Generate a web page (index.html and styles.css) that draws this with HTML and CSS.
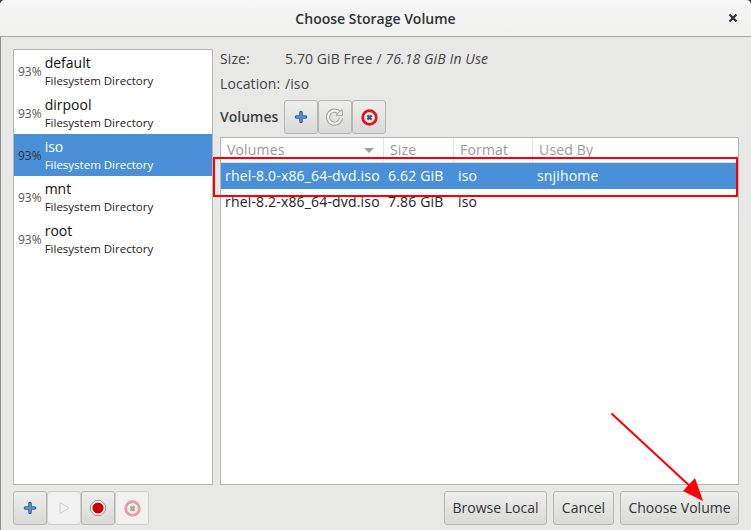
FILE: index.html
```html
<!DOCTYPE html>
<html lang="en">

<head>
    <meta charset="UTF-8">
    <meta name="viewport" content="width=device-width, initial-scale=1.0">
    <title>Choose Storage Volume</title>
    <link rel="stylesheet" href="styles.css">
</head>

<body>
    <div class="window">
        <div class="titlebar">
            <span class="title">Choose Storage Volume</span>
            <svg class="close" width="10" height="10" viewBox="0 0 10 10">
                <path d="M1.5 1.5 L8.5 8.5 M8.5 1.5 L1.5 8.5" stroke="#2e3436" stroke-width="2.2" fill="none" />
            </svg>
        </div>

        <div class="content">
            <div class="left">
                <div class="pools">
                    <div class="pool">
                        <span class="pct">93%</span>
                        <div><div class="pool-name">default</div><div class="pool-type">Filesystem Directory</div></div>
                    </div>
                    <div class="pool">
                        <span class="pct">93%</span>
                        <div><div class="pool-name">dirpool</div><div class="pool-type">Filesystem Directory</div></div>
                    </div>
                    <div class="pool selected">
                        <span class="pct">93%</span>
                        <div><div class="pool-name">iso</div><div class="pool-type">Filesystem Directory</div></div>
                    </div>
                    <div class="pool">
                        <span class="pct">93%</span>
                        <div><div class="pool-name">mnt</div><div class="pool-type">Filesystem Directory</div></div>
                    </div>
                    <div class="pool">
                        <span class="pct">93%</span>
                        <div><div class="pool-name">root</div><div class="pool-type">Filesystem Directory</div></div>
                    </div>
                </div>
                <div class="toolbar">
                    <button class="tool">
                        <svg width="14" height="14" viewBox="0 0 14 14"><path d="M7 2.5 V11.5 M2.5 7 H11.5" stroke="#2f5f9e" stroke-width="3.6" stroke-linecap="round" /><path d="M7 3 V11 M3 7 H11" stroke="#5b8fcb" stroke-width="1.8" stroke-linecap="round" /></svg>
                    </button>
                    <button class="tool off">
                        <svg width="14" height="14" viewBox="0 0 14 14"><path d="M3 1.5 L12 7 L3 12.5 Z" fill="#f2f2f2" stroke="#cdcdcd" /></svg>
                    </button>
                    <button class="tool">
                        <svg width="16" height="16" viewBox="0 0 16 16"><path d="M5 .7 H11 L15.3 5 V11 L11 15.3 H5 L.7 11 V5 Z" fill="#fff" stroke="#8a8a8a" /><circle cx="8" cy="8" r="5.6" fill="#d40000" /></svg>
                    </button>
                    <button class="tool off">
                        <svg width="17" height="17" viewBox="0 0 17 17"><circle cx="8.5" cy="8.5" r="6.8" fill="#eee" stroke="#ec9a9a" stroke-width="2.8" /><path d="M6.4 6.4 L10.6 10.6 M10.6 6.4 L6.4 10.6" stroke="#a8a8a8" stroke-width="2.2" /></svg>
                    </button>
                </div>
            </div>

            <div class="right">
                <div class="info">
                    <div class="info-row"><span class="info-label">Size:</span><span>5.70 GiB Free / <em>76.18 GiB In Use</em></span></div>
                    <div class="info-row"><span class="info-label">Location:</span><span>/iso</span></div>
                </div>
                <div class="vol-bar">
                    <span class="vol-title">Volumes</span>
                    <div class="group">
                        <button class="tool">
                            <svg width="14" height="14" viewBox="0 0 14 14"><path d="M7 2.5 V11.5 M2.5 7 H11.5" stroke="#2f5f9e" stroke-width="3.6" stroke-linecap="round" /><path d="M7 3 V11 M3 7 H11" stroke="#5b8fcb" stroke-width="1.8" stroke-linecap="round" /></svg>
                        </button>
                        <button class="tool">
                            <svg width="18" height="18" viewBox="0 0 18 18"><path d="M13.5 5 A6.5 6.5 0 1 0 15 10" fill="none" stroke="#a0a0a0" stroke-width="4.2" /><path d="M13.5 5 A6.5 6.5 0 1 0 15 10" fill="none" stroke="#f0f0f0" stroke-width="2.2" /><path d="M10 7 L16.5 7.5 L16 1.5 Z" fill="#ececec" stroke="#a0a0a0" /></svg>
                        </button>
                        <button class="tool">
                            <svg width="17" height="17" viewBox="0 0 17 17"><circle cx="8.5" cy="8.5" r="6.8" fill="#eee" stroke="#e0141c" stroke-width="2.8" /><path d="M6.4 6.4 L10.6 10.6 M10.6 6.4 L6.4 10.6" stroke="#555" stroke-width="2.2" /></svg>
                        </button>
                    </div>
                </div>
                <div class="table">
                    <div class="row head">
                        <div class="col c1">Volumes<span class="sort"></span></div>
                        <div class="col c2">Size</div>
                        <div class="col c3">Format</div>
                        <div class="col c4">Used By</div>
                    </div>
                    <div class="row vol selected">
                        <div class="col c1">rhel-8.0-x86_64-dvd.iso</div>
                        <div class="col c2">6.62 GiB</div>
                        <div class="col c3">iso</div>
                        <div class="col c4">snjihome</div>
                    </div>
                    <div class="row vol">
                        <div class="col c1">rhel-8.2-x86_64-dvd.iso</div>
                        <div class="col c2">7.86 GiB</div>
                        <div class="col c3">iso</div>
                        <div class="col c4"></div>
                    </div>
                </div>
                <div class="actions">
                    <button class="btn browse">Browse Local</button>
                    <button class="btn cancel">Cancel</button>
                    <button class="btn choose">Choose Volume</button>
                </div>
            </div>
        </div>

        <!-- annotations drawn over the dialog -->
        <div class="mark"></div>
        <svg class="arrow" width="751" height="530" viewBox="0 0 751 530">
            <path d="M611.5 413.5 L692 488" stroke="#ff0000" stroke-width="2" fill="none" />
            <path d="M703 501 L683 491 L695 478 Z" fill="#ff0000" />
        </svg>
    </div>
</body>

</html>
```

FILE: styles.css
```css
html, body {
    margin: 0;
    padding: 0;
}

body {
    width: 751px;
    height: 530px;
    overflow: hidden;
    font-family: "Open Sans", "Noto Sans", sans-serif;
    font-size: 14px;
    color: #2e3436;
    background: #3a3a3a;
}

.window {
    position: relative;
    width: 751px;
    height: 530px;
    background: #e8e8e7;
    border-radius: 5px 5px 0 0;
    box-shadow: inset 1px 0 0 #8f8f8f;
    overflow: hidden;
}

.titlebar {
    height: 36px;
    display: flex;
    align-items: center;
    justify-content: center;
    background: linear-gradient(#f6f6f6, #f1f1f0);
    border-bottom: 1px solid #a5a5a1;
}

.title {
    font-weight: 600;
    font-size: 14px;
}

.close {
    position: absolute;
    right: 13px;
    top: 13px;
}

.content {
    display: flex;
    gap: 7px;
    padding: 12px 12px 5px 13px;
    box-sizing: border-box;
    height: 493px;
}

.left {
    width: 200px;
    display: flex;
    flex-direction: column;
}

.pools {
    flex: 1;
    background: #fff;
    border: 1px solid #b6b6b3;
}

.pool {
    height: 42px;
    display: flex;
    align-items: center;
    gap: 3px;
    padding-left: 4px;
    line-height: 18px;
}

.pct {
    font-size: 12px;
    color: #555;
    margin-top: 1px;
}

.pool-name {
    color: #111;
    font-size: 14px;
    margin-top: 2px;
}

.pool-type {
    color: #222;
    font-size: 11.5px;
}

.pool.selected {
    background: #4a90d9;
}

.pool.selected .pool-name,
.pool.selected .pool-type {
    color: #fff;
}

.pool.selected .pct {
    color: #333;
}

.toolbar {
    display: flex;
    margin-top: 6px;
    height: 34px;
}

.tool {
    width: 34px;
    height: 34px;
    padding: 0;
    display: flex;
    align-items: center;
    justify-content: center;
    border: 1px solid #b6b6b3;
    border-radius: 3px;
    background: linear-gradient(#eeeeed, #d9d9d7);
}

.tool.off {
    background: #f1f1f1;
    border-color: #cfcfcd;
}

.right {
    flex: 1;
    display: flex;
    flex-direction: column;
    min-width: 0;
}

.info {
    display: flex;
    flex-direction: column;
    gap: 4px;
    letter-spacing: .1px;
}

.info-row {
    height: 21px;
    box-sizing: border-box;
    padding-bottom: 2px;
    display: flex;
    align-items: center;
    color: #444;
}

.info-label {
    width: 65px;
}

.vol-bar {
    display: flex;
    align-items: center;
    gap: 6px;
    margin-top: 5px;
    height: 34px;
}

.vol-title {
    font-weight: 600;
    color: #3a3f40;
    padding-bottom: 2px;
}

.group {
    display: flex;
}

.table {
    flex: 1;
    margin-top: 3px;
    background: #fff;
    border: 1px solid #b6b6b3;
}

.row {
    display: flex;
    height: 26px;
    box-sizing: border-box;
    padding-bottom: 2px;
    align-items: center;
    color: #222;
    letter-spacing: .17px;
}

.head {
    color: #9a9a9a;
    height: 25px;
    padding-bottom: 0;
    border-bottom: 1px solid #dcdcdc;
}

.head .col {
    height: 100%;
    display: flex;
    align-items: center;
    padding-left: 6px;
    padding-bottom: 2px;
    box-sizing: border-box;
    border-right: 1px solid #e4e4e4;
}

.col {
    box-sizing: border-box;
    padding-left: 4px;
    white-space: nowrap;
}

.c1 { width: 163px; position: relative; }
.c2 { width: 70px; }
.c3 { width: 79px; }
.c4 { flex: 1; }

.head .c4 { border-right: 0; }

.sort {
    position: absolute;
    right: 9px;
    top: 10px;
    border-left: 5px solid transparent;
    border-right: 5px solid transparent;
    border-top: 5px solid #a0a0a0;
}

.vol.selected {
    background: #4a90d9;
    color: #fff;
}

.actions {
    display: flex;
    justify-content: flex-end;
    gap: 6px;
    margin-top: 6px;
    height: 34px;
}

.btn {
    height: 34px;
    padding: 0 0 2px;
    font-family: inherit;
    font-size: 14px;
    color: #2e3436;
    border: 1px solid #b6b6b3;
    border-radius: 3px;
    background: linear-gradient(#eeeeed, #d9d9d7);
}

.browse { width: 103px; }
.cancel { width: 61px; }
.choose { width: 119px; }

.mark {
    position: absolute;
    left: 213px;
    top: 157px;
    width: 525px;
    height: 40px;
    box-sizing: border-box;
    border: 2px solid #ff0000;
}

.arrow {
    position: absolute;
    left: 0;
    top: 0;
}
```
